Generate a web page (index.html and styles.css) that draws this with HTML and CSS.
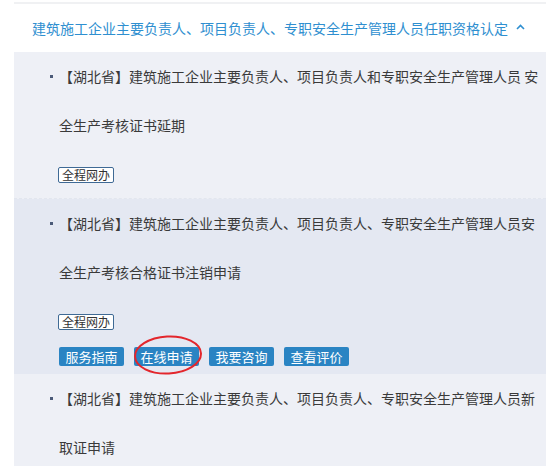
FILE: index.html
```html
<!DOCTYPE html>
<html lang="zh-CN">
<head>
<meta charset="utf-8">
<title>任职资格认定</title>
<link rel="stylesheet" href="styles.css">
</head>
<body>
<div class="wrap">
  <div class="head">
    <span class="head-title">建筑施工企业主要负责人、项目负责人、专职安全生产管理人员任职资格认定</span>
    <svg class="chev" width="9" height="6" viewBox="0 0 9 6"><polyline points="1,5 4.5,1.5 8,5" fill="none" stroke="#2f8fd0" stroke-width="1.6"/></svg>
  </div>
  <ul class="list">
    <li class="item item-a">
      <span class="dot-col"><span class="dot"></span></span>
      <div class="content">
        <p class="name">【湖北省】建筑施工企业主要负责人、项目负责人和专职安全生产管理人员 安全生产考核证书延期</p>
        <div class="tags"><span class="tag">全程网办</span></div>
      </div>
    </li>
    <li class="item item-b">
      <span class="dot-col"><span class="dot"></span></span>
      <div class="content">
        <p class="name">【湖北省】建筑施工企业主要负责人、项目负责人、专职安全生产管理人员安全生产考核合格证书注销申请</p>
        <div class="tags"><span class="tag">全程网办</span></div>
        <div class="btns">
          <span class="btn">服务指南</span>
          <span class="btn btn-ring">在线申请<svg class="ring" width="72" height="42" viewBox="0 0 72 42"><ellipse cx="35" cy="20" rx="33" ry="18.5" fill="none" stroke="#e3262c" stroke-width="2" transform="rotate(-3 35 20)"/></svg></span>
          <span class="btn">我要咨询</span>
          <span class="btn">查看评价</span>
        </div>
      </div>
    </li>
    <li class="item item-a">
      <span class="dot-col"><span class="dot"></span></span>
      <div class="content">
        <p class="name">【湖北省】建筑施工企业主要负责人、项目负责人、专职安全生产管理人员新取证申请</p>
      </div>
    </li>
  </ul>
</div>
</body>
</html>
```

FILE: styles.css
```css
html, body {
  margin: 0;
  padding: 0;
  background: #ffffff;
}

body {
  font-family: "Noto Sans CJK SC", "Noto Sans", sans-serif;
  color: #333333;
  overflow: hidden;
}

.wrap {
  margin: 2px 0 0 14px;
  width: 532px;
  border-top: 2px solid #f0f1f3;
}

.head {
  height: 48px;
  display: flex;
  align-items: center;
  padding-left: 18px;
}

.head-title {
  font-size: 14px;
  line-height: 48px;
  color: #2f8fd0;
  white-space: nowrap;
}

.chev {
  margin-left: 8px;
  margin-top: -2px;
}

.list {
  list-style: none;
  margin: 0;
  padding: 0;
}

.item {
  display: flex;
  padding-left: 34px;
}

.item-a {
  background: #eef0f6;
}

.item-b {
  background: #e4e8f2;
}

.item-a:first-child {
  border-bottom: 1px dashed #e2e6ee;
}

.dot-col {
  width: 11px;
  height: 49px;
  display: flex;
  align-items: center;
  flex: none;
}

.dot {
  width: 3px;
  height: 3px;
  margin-left: 2px;
  background: #4b5a78;
}

.content {
  width: 486px;
  padding-bottom: 16px;
}

.item-a:first-child .content {
  padding-bottom: 15px;
}

.item-b .content {
  padding-bottom: 8px;
}

.name {
  margin: 0;
  font-size: 14px;
  line-height: 49px;
  color: #3a3a3a;
}

.tags {
  display: flex;
  margin-top: 17px;
}

.tag {
  display: block;
  box-sizing: border-box;
  height: 16px;
  padding: 0 3px;
  font-size: 12px;
  line-height: 14px;
  color: #333333;
  background: #ffffff;
  border: 1px solid #3f6a95;
  border-radius: 2px;
  margin-left: -1px;
}

.btns {
  display: flex;
  gap: 10px;
  margin-top: 17px;
}

.btn {
  display: block;
  width: 65px;
  height: 19px;
  line-height: 19px;
  text-align: center;
  font-size: 13px;
  color: #ffffff;
  background: #2a84c3;
  border-radius: 2px;
}

.btn-ring {
  position: relative;
}

.ring {
  position: absolute;
  left: -1px;
  top: -12px;
  pointer-events: none;
}
```
